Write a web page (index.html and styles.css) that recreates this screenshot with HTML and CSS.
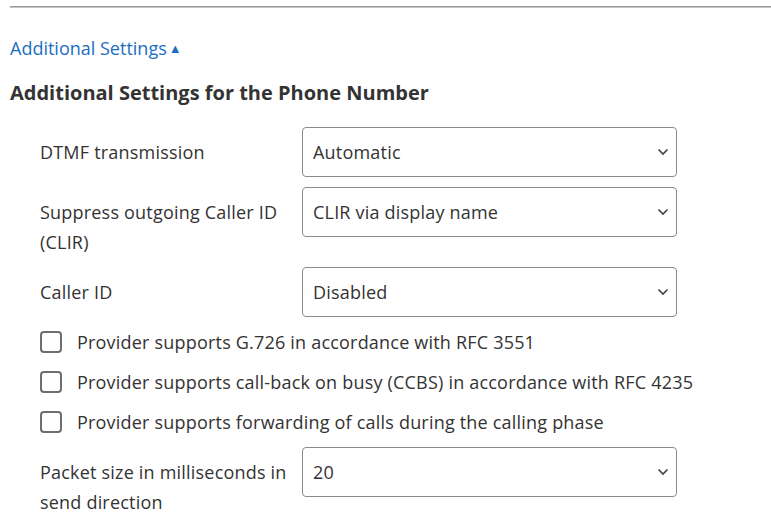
FILE: index.html
```html
<!DOCTYPE html>
<html>

<head>
    <title>Additional Settings</title>
    <link rel="stylesheet" href="styles.css">
</head>

<body>

    <hr class="divider">

    <a class="toggle" href="#">Additional Settings<span class="caret">&#9650;</span></a>

    <h2 class="section-title">Additional Settings for the Phone Number</h2>

    <div class="settings">
        <div class="field">
            <label class="field-label" for="dtmf">DTMF transmission</label>
            <div class="select-wrap">
                <select id="dtmf">
                    <option>Automatic</option>
                </select>
                <svg class="chevron" width="12" height="8" viewBox="0 0 12 8"><path d="M1.5 1.5 6 6l4.5-4.5" fill="none" stroke="#444" stroke-width="1.7"/></svg>
            </div>
        </div>

        <div class="field">
            <label class="field-label" for="clir">Suppress outgoing Caller ID (CLIR)</label>
            <div class="select-wrap">
                <select id="clir">
                    <option>CLIR via display name</option>
                </select>
                <svg class="chevron" width="12" height="8" viewBox="0 0 12 8"><path d="M1.5 1.5 6 6l4.5-4.5" fill="none" stroke="#444" stroke-width="1.7"/></svg>
            </div>
        </div>

        <div class="field">
            <label class="field-label" for="callerid">Caller ID</label>
            <div class="select-wrap">
                <select id="callerid">
                    <option>Disabled</option>
                </select>
                <svg class="chevron" width="12" height="8" viewBox="0 0 12 8"><path d="M1.5 1.5 6 6l4.5-4.5" fill="none" stroke="#444" stroke-width="1.7"/></svg>
            </div>
        </div>

        <label class="check">
            <input type="checkbox">
            <span class="box"></span>
            Provider supports G.726 in accordance with RFC 3551
        </label>
        <label class="check">
            <input type="checkbox">
            <span class="box"></span>
            Provider supports call-back on busy (CCBS) in accordance with RFC 4235
        </label>
        <label class="check">
            <input type="checkbox">
            <span class="box"></span>
            Provider supports forwarding of calls during the calling phase
        </label>

        <div class="field">
            <label class="field-label" for="packet">Packet size in milliseconds in send direction</label>
            <div class="select-wrap">
                <select id="packet">
                    <option>20</option>
                </select>
                <svg class="chevron" width="12" height="8" viewBox="0 0 12 8"><path d="M1.5 1.5 6 6l4.5-4.5" fill="none" stroke="#444" stroke-width="1.7"/></svg>
            </div>
        </div>
    </div>

</body>

</html>
```

FILE: styles.css
```css
/* Page */
body {
    margin: 0;
    padding: 0 0 0 10px;
    font-family: "Open Sans", Arial, sans-serif;
    font-size: 18px;
    letter-spacing: 0.2px;
    color: #333333;
    background-color: #ffffff;
}

.divider {
    margin: 6px 0 0;
    border: none;
    border-top: 1px solid #9a9a9a;
    border-bottom: 1px solid #c4c4c4;
    height: 0;
}

.toggle {
    display: block;
    margin-top: 25px;
    line-height: 30px;
    color: #1b6ec2;
    text-decoration: none;
    letter-spacing: 0;
}

.caret {
    font-size: 13px;
    margin-left: 2px;
    vertical-align: 2px;
}

.section-title {
    margin: 15px 0 19px;
    line-height: 30px;
    font-size: 20px;
    font-weight: bold;
    letter-spacing: 0;
    color: #333333;
}

/* Rows */
.settings {
    padding-left: 30px;
    display: flex;
    flex-direction: column;
    gap: 10px;
}

.field {
    display: flex;
    align-items: flex-start;
}

.field-label {
    width: 255px;
    margin-right: 7px;
    padding-top: 10px;
    line-height: 30px;
}

.select-wrap {
    position: relative;
    width: 375px;
}

.select-wrap select {
    appearance: none;
    -webkit-appearance: none;
    width: 100%;
    height: 50px;
    padding: 0 30px 0 10px;
    border: 1px solid #8a8a8a;
    border-radius: 4px;
    background-color: #ffffff;
    font-family: inherit;
    font-size: 18px;
    letter-spacing: 0.2px;
    color: #333333;
}

.chevron {
    position: absolute;
    right: 8px;
    top: 21px;
    pointer-events: none;
}

/* Checkboxes */
.check {
    display: flex;
    align-items: center;
    height: 30px;
    cursor: pointer;
}

.check input {
    display: none;
}

.box {
    width: 18px;
    height: 18px;
    border: 2px solid #6e6e6e;
    border-radius: 4px;
    margin-right: 15px;
    flex-shrink: 0;
}
```
